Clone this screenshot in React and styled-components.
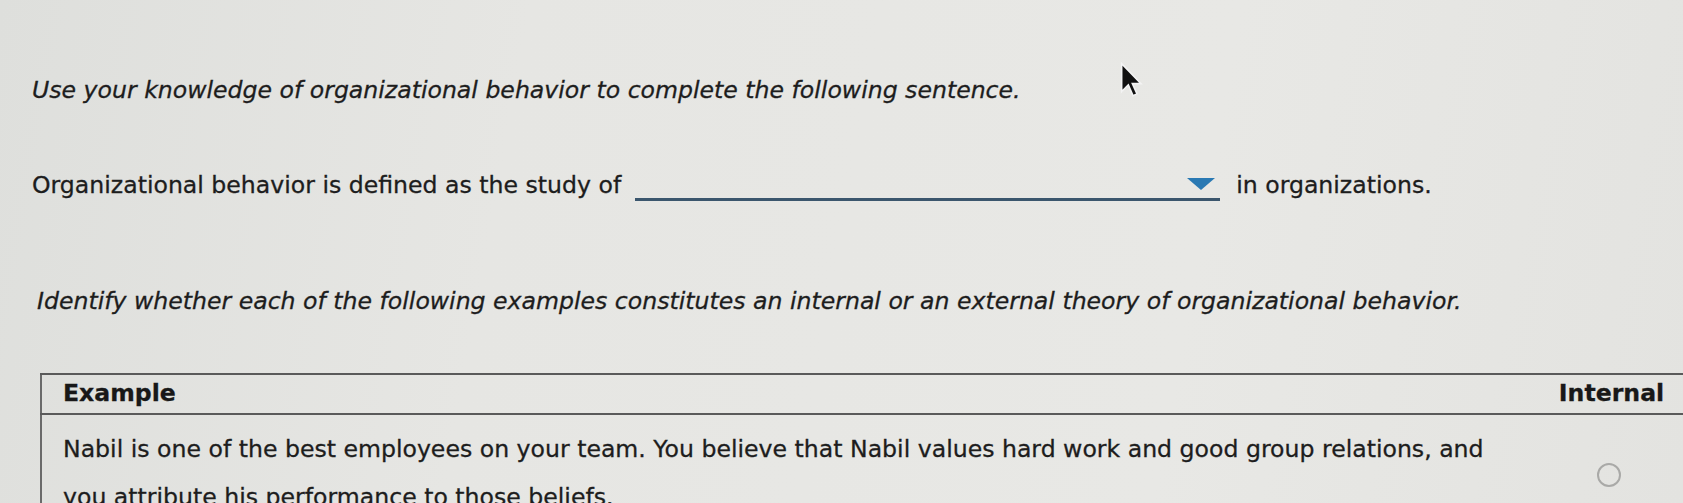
import React from "react";
import styled, { createGlobalStyle } from "styled-components";

const GlobalStyle = createGlobalStyle`
  html, body {
    margin: 0;
    padding: 0;
    overflow: hidden;
    background: #e4e4e1;
  }
  body {
    font-family: "DejaVu Sans", Verdana, sans-serif;
    color: #1d1d1d;
    -webkit-text-stroke: 0.3px #1d1d1d;
  }
`;

const Page = styled.div`
  position: relative;
  width: 1683px;
  height: 503px;
  padding: 73px 0 0 32px;
  box-sizing: border-box;
  overflow: hidden;
  background: linear-gradient(100deg, #dedfdc 0%, #e6e6e3 30%, #e8e8e5 70%, #e3e3e0 100%);
`;

const Prompt = styled.p`
  margin: 0 0 ${(p) => p.gap || 0}px ${(p) => p.shift || 0}px;
  font-size: 23.6px;
  line-height: 34px;
  font-style: ${(p) => (p.italic ? "italic" : "normal")};
  white-space: nowrap;
`;

const Dropdown = styled.span`
  display: inline-block;
  position: relative;
  width: 585px;
  height: 28px;
  margin: 0 9px 0 6px;
  vertical-align: -8px;
  border-bottom: 3px solid #3b566d;
  box-sizing: border-box;
`;

const Caret = styled.svg`
  position: absolute;
  right: 5px;
  top: 5px;
`;

const Table = styled.table`
  margin-left: 8px;
  border-collapse: collapse;
  font-size: 23.6px;
  table-layout: fixed;
  width: 1807px;
`;

const HeadCell = styled.th`
  text-align: ${(p) => (p.center ? "center" : "left")};
  font-weight: bold;
  line-height: 27px;
  padding: 5px 20px 6px 21px;
  border-top: 2px solid #5a5a5a;
  border-bottom: 2px solid #5a5a5a;
  border-left: ${(p) => (p.first ? "2px solid #6a6a6a" : "none")};
  color: #181818;
`;

const Cell = styled.td`
  vertical-align: middle;
  text-align: ${(p) => (p.center ? "center" : "left")};
  line-height: 48px;
  padding: 10px 20px 10px 21px;
  border-left: ${(p) => (p.first ? "2px solid #6a6a6a" : "none")};
`;

const Radio = styled.span`
  display: inline-block;
  width: 20px;
  height: 20px;
  border: 2px solid #a9a9a7;
  border-radius: 50%;
  vertical-align: middle;
  margin-right: 6px;
`;

const Cursor = styled.svg`
  position: absolute;
  left: 1119px;
  top: 62px;
`;

export default function App() {
  return (
    <>
      <GlobalStyle />
      <Page>
        <Prompt italic gap={61}>
          Use your knowledge of organizational behavior to complete the following sentence.
        </Prompt>
        <Prompt gap={82}>
          Organizational behavior is defined as the study of{" "}
          <Dropdown>
            <Caret width="28" height="12" viewBox="0 0 28 12">
              <path d="M0 0 H28 L14 12 Z" fill="#2a79b3" />
            </Caret>
          </Dropdown>{" "}
          in organizations.
        </Prompt>
        <Prompt italic shift={5} gap={55}>
          Identify whether each of the following examples constitutes an internal or an external theory of organizational behavior.
        </Prompt>
        <Table>
          <colgroup>
            <col style={{ width: "1491px" }} />
            <col style={{ width: "158px" }} />
            <col style={{ width: "158px" }} />
          </colgroup>
          <thead>
            <tr>
              <HeadCell first>Example</HeadCell>
              <HeadCell center>Internal</HeadCell>
              <HeadCell center>External</HeadCell>
            </tr>
          </thead>
          <tbody>
            <tr>
              <Cell first>
                Nabil is one of the best employees on your team. You believe that Nabil values hard work and good group relations, and you attribute his performance to those beliefs.
              </Cell>
              <Cell center>
                <Radio />
              </Cell>
              <Cell center>
                <Radio />
              </Cell>
            </tr>
          </tbody>
        </Table>
        <Cursor width="24" height="38" viewBox="0 0 18 28">
          <path d="M2 1 L2 22 L7 17 L10.5 25 L13.5 23.7 L10 16 L16.5 16 Z" fill="#111" stroke="#f4f4f4" strokeWidth="1.2" />
        </Cursor>
      </Page>
    </>
  );
}
